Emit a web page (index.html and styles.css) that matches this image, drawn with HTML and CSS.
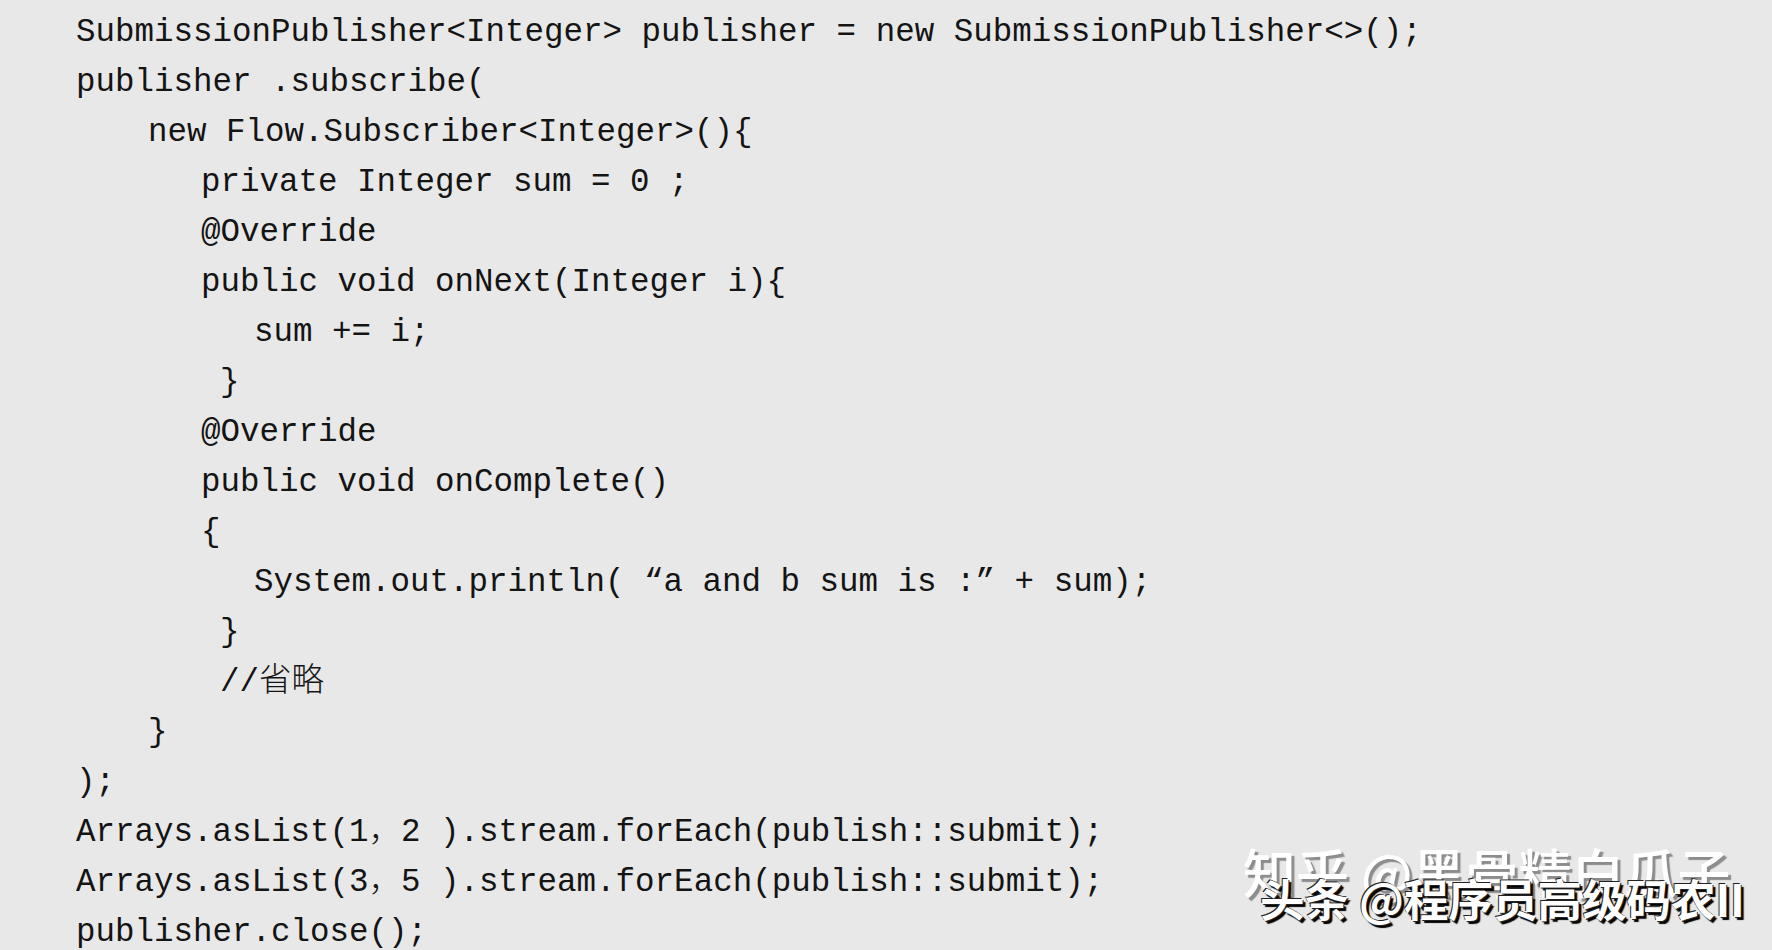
FILE: index.html
```html
<!DOCTYPE html>
<html lang="zh">
<head>
<meta charset="utf-8">
<title>SubmissionPublisher</title>
<link rel="stylesheet" href="styles.css">
</head>
<body>
<main class="page">
  <div class="code">
    <div class="ln">SubmissionPublisher&lt;Integer&gt; publisher = new SubmissionPublisher&lt;&gt;();</div>
    <div class="ln">publisher .subscribe(</div>
    <div class="ln in1">new Flow.Subscriber&lt;Integer&gt;(){</div>
    <div class="ln in2">private Integer sum = 0 ;</div>
    <div class="ln in2">@Override</div>
    <div class="ln in2">public void onNext(Integer i){</div>
    <div class="ln in3">sum += i;</div>
    <div class="ln in2h">}</div>
    <div class="ln in2">@Override</div>
    <div class="ln in2">public void onComplete()</div>
    <div class="ln in2">{</div>
    <div class="ln in3">System.out.println( “a and b sum is :” + sum);</div>
    <div class="ln in2h">}</div>
    <div class="ln in2h">//<span class="cjk">省略</span></div>
    <div class="ln in1">}</div>
    <div class="ln">);</div>
    <div class="ln">Arrays.asList(1<span class="cjk">，</span>2 ).stream.forEach(publish::submit);</div>
    <div class="ln">Arrays.asList(3<span class="cjk">，</span>5 ).stream.forEach(publish::submit);</div>
    <div class="ln">publisher.close();</div>
  </div>
  <div class="wm wm-zhihu">知乎 @黑骨精白瓜子</div>
  <div class="wm wm-toutiao">头条 @程序员高级码农II</div>
</main>
</body>
</html>
```

FILE: styles.css
```css
html, body {
  margin: 0;
  padding: 0;
}
body {
  background: #e8e8e8;
  width: 1772px;
  height: 950px;
  overflow: hidden;
}
.page {
  position: relative;
  width: 1772px;
  height: 950px;
  background: #e8e8e8;
}
.code {
  padding: 8px 0 0 76px;
  font-family: "Liberation Mono", "Noto Sans CJK SC", monospace;
  font-size: 32.5px;
  line-height: 50px;
  color: #141414;
}
.ln {
  white-space: pre;
  height: 50px;
}
.in1 { padding-left: 72px; }
.in2 { padding-left: 125px; }
.in2h { padding-left: 144px; }
.in3 { padding-left: 178px; }
.cjk {
  font-family: "Noto Sans CJK SC", sans-serif;
  font-weight: 300;
  line-height: 1;
}
.wm {
  position: absolute;
  font-family: "Noto Sans CJK SC", sans-serif;
  font-weight: 700;
  color: #ffffff;
  white-space: nowrap;
  line-height: 1;
}
.wm-zhihu {
  left: 1243px;
  top: 845px;
  font-size: 53px;
  font-weight: 500;
  text-shadow: 3px 3px 1px rgba(110, 110, 110, 0.75);
}
.wm-toutiao {
  left: 1260px;
  top: 876px;
  font-size: 44.5px;
  text-shadow: -1px -1px 0 #222, 1px 1px 0 #222, 3px 3px 1px #000;
}
```
